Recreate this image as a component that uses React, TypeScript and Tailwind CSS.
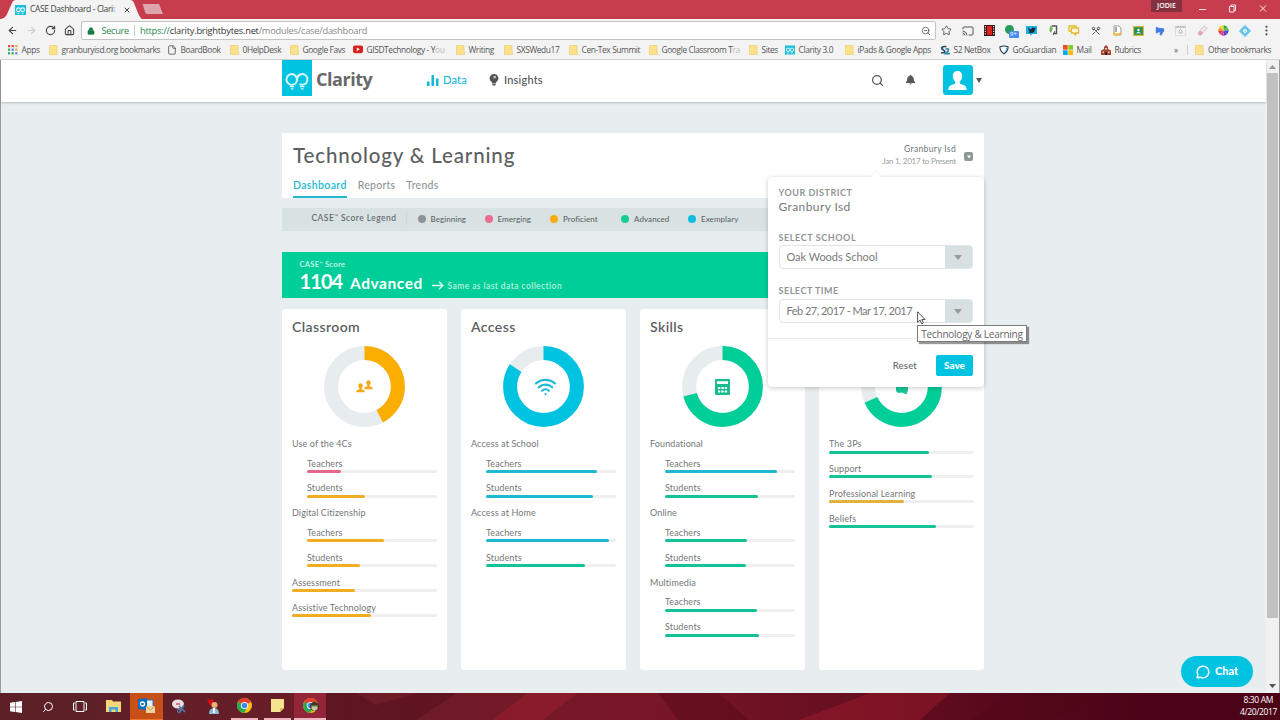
import React from "react";
import {
  ArrowLeft,
  ArrowRight,
  Calculator,
  Cast,
  File,
  House,
  Lock,
  Megaphone,
  MessageCircle,
  MoreVertical,
  RotateCw,
  Scissors,
  Search,
  Star,
  Wifi,
  X,
  ZoomOut,
} from "lucide-react";

interface Metric {
  label: string;
  value?: number;
  color?: string;
  nested?: boolean;
}

interface CardData {
  title: string;
  percent: number;
  color: string;
  icon: React.ReactNode;
  metrics: Metric[];
}

const PINK = "bg-[#e5688c]";
const ORANGE = "bg-[#f2ae22]";
const GREEN = "bg-[#15c496]";
const BLUE = "bg-[#1fb8d3]";

const Folder = () => (
  <svg width="9" height="10" viewBox="0 0 9 10">
    <path d="M.5.5h7.5V7l.7.6V9.5H.5z" fill="#fbe18a" stroke="#ecd17a" strokeWidth=".8" />
  </svg>
);

const ClarityIcon = ({ className }: { className: string }) => (
  <svg viewBox="0 0 30 36" className={className} preserveAspectRatio="none">
    <rect width="30" height="36" fill="#00c3e2" />
    <g fill="none" stroke="#d9f8fd" strokeWidth="1.9">
      <path d="M12.500 24A5.200 5.400 0 1 1 14.800 18.500Q15.200 21 15.200 20.500A5.200 5.400 0 1 1 17.600 24" />
      <path d="M14.800 20.500Q14.500 23 12.500 24.500M15.200 18.500Q15.500 15.500 17.800 14.700" />
      <path d="M7.800 26.700h4.500M17.900 26.700h4.500M8.800 28.800h2.600M18.900 28.800h2.600" strokeWidth="1.300" />
    </g>
  </svg>
);

// same mark without the bulb bases, readable at favicon size
const ClarityFavicon = () => (
  <svg width="11" height="10" viewBox="0 0 11 10">
    <path d="M0 0h11v10H0z" fill="#1cbfdb" />
    <g fill="none" stroke="#e4fafd" strokeWidth="1.100">
      <circle cx="3.400" cy="4.800" r="1.900" />
      <circle cx="7.600" cy="4.800" r="1.900" />
      <path d="M2.500 8.300h1.800M6.700 8.300h1.800" />
    </g>
  </svg>
);

const UserShape = ({ className }: { className: string }) => (
  <svg viewBox="0 0 20 20" className={className} fill="currentColor">
    <path d="M10 0c3.200 0 5 2.200 5 5.200 0 2.400-1.100 4.800-2.600 5.800v1.400c0 1 1.200 1.500 3 2.200 2.600 1 4.100 1.700 4.300 5.400H.3c.2-3.700 1.700-4.400 4.300-5.400 1.800-.7 3-1.200 3-2.200V11C6.100 10 5 7.600 5 5.200 5 2.200 6.800 0 10 0z" />
  </svg>
);

const ChromeLogo = ({ className }: { className: string }) => (
  <svg viewBox="0 0 20 20" className={className}>
    <circle cx="10" cy="10" r="10" fill="#fbc116" />
    <path d="M10 10L1.300 5A10 10 0 0 1 18.700 5z" fill="#e0402f" />
    <path d="M10 10L1.300 5A10 10 0 0 0 9.500 20L14 12z" fill="#2da94f" />
    <circle cx="10" cy="10" r="4.800" fill="#fff" />
    <circle cx="10" cy="10" r="3.700" fill="#4285f4" />
  </svg>
);

const bookmarks = [
  {
    label: "Apps",
    width: "w-[40px]",
    icon: (
      <svg width="10" height="10" viewBox="0 0 10 10">
        {["#e0483e", "#e0483e", "#e6a93a", "#38a860", "#4a8af4", "#e6a93a", "#38a860", "#38a860", "#4a8af4"].map(
          (c, i) => (
            <rect key={i} x={(i % 3) * 3.600} y={Math.floor(i / 3) * 3.600} width="2.200" height="2.200" fill={c} />
          )
        )}
      </svg>
    ),
  },
  { label: "granburyisd.org bookmarks", width: "w-[119px]", icon: <Folder /> },
  { label: "BoardBook", width: "w-[62px]", icon: <File size={10} color="#555" strokeWidth={2} /> },
  { label: "0HelpDesk", width: "w-[60px]", icon: <Folder /> },
  { label: "Google Favs", width: "w-[64px]", icon: <Folder /> },
  {
    label: "GISDTechnology - Y",
    faded: "ou",
    width: "w-[102px]",
    icon: (
      <svg width="11" height="9" viewBox="0 0 11 9">
        <rect width="11" height="8.500" rx="2" fill="#d8201f" />
        <path d="M4.200 2.300v4l3.200-2z" fill="#fff" />
      </svg>
    ),
  },
  { label: "Writing", width: "w-[48px]", icon: <Folder /> },
  { label: "SXSWedu17", width: "w-[65px]", icon: <Folder /> },
  { label: "Cen-Tex Summit", width: "w-[80px]", icon: <Folder /> },
  { label: "Google Classroom T", faded: "ra", width: "w-[100px]", icon: <Folder /> },
  { label: "Sites", width: "w-[37px]", icon: <Folder /> },
  { label: "Clarity 3.0", width: "w-[59px]", icon: <ClarityFavicon /> },
  { label: "iPads & Google Apps", width: "w-[96px]", icon: <Folder /> },
  {
    label: "S2 NetBox",
    width: "w-[59px]",
    icon: (
      <svg width="11" height="10" viewBox="0 0 11 10" fill="none" strokeWidth="1.800">
        <path d="M7 1.500C3 .5 0 2.500 3 4.500S7 8 1 8" stroke="#254a63" />
        <path d="M6 4c3-1 4 0 3 2L6 9h5" stroke="#3388ae" />
      </svg>
    ),
  },
  {
    label: "GoGuardian",
    width: "w-[64px]",
    icon: (
      <svg width="11" height="10" viewBox="0 0 11 10">
        <path d="M1 1.500Q5.500-.3 10 1.500Q10 6.500 5.500 9.300Q1 6.500 1 1.500z" fill="#fff" stroke="#20384a" strokeWidth="1.200" />
        <path d="M8.500 2.500Q8.500 6 5.500 8" fill="none" stroke="#36a8cf" strokeWidth="1" />
      </svg>
    ),
  },
  {
    label: "Mail",
    width: "w-[38px]",
    icon: (
      <svg width="10" height="10" viewBox="0 0 10 10">
        <path d="M0 0h4.700v4.700H0z" fill="#f1511b" />
        <path d="M5.300 0H10v4.700H5.300z" fill="#80cc28" />
        <path d="M0 5.300h4.700V10H0z" fill="#00adef" />
        <path d="M5.300 5.300H10V10H5.300z" fill="#fbbc09" />
      </svg>
    ),
  },
  {
    label: "Rubrics",
    width: "w-[73px]",
    icon: (
      <svg width="10" height="10" viewBox="0 0 10 10">
        <path d="M5 0l2 2v2l3 1.500V10H0V5.500L3 4V2z" fill="#a7423a" />
        <path d="M4 3h2v1.500H4zM1.500 6.500H3V8H1.500zM7 6.500h1.500V8H7z" fill="#f3cf8e" />
        <path d="M4 7h2v3H4z" fill="#36251f" />
      </svg>
    ),
  },
];

const extensions = [
  <Star size={11} color="#555" />,
  <Cast size={12} color="#555" />,
  <svg width="11" height="11" viewBox="0 0 11 11">
    <path d="M0 0h11v11H0z" fill="#3b1518" />
    <path d="M3 1h5v9H3z" fill="#e0221c" />
    <path d="M1.300 1v9M9.700 1v9" stroke="#fff" strokeWidth="1" strokeDasharray="1.200 1.200" />
  </svg>,
  <div className="relative h-[11px] w-[12px]">
    <div className="h-[9px] w-[9px] rounded-full bg-[#259b5b]" />
    <span className="absolute left-[4px] top-[6px] h-[7px] w-[10px] rounded-[1px] bg-[#4a8af5] text-center text-[6px] leading-[6px] text-white">
      9+
    </span>
  </div>,
  <svg width="11" height="10" viewBox="0 0 11 10">
    <path d="M0 0h11v8H6L5 10 4 8H0z" fill="#23b0e0" />
    <path d="M2 1.500Q4 4 5.500 3Q6 1 8 1.800L9.500 2Q9 7 5 7Q3 7 2 6L4 5.500Q2 4 2 1.500z" fill="#122a3a" />
  </svg>,
  <svg width="11" height="12" viewBox="0 0 11 12">
    <path d="M3.500 1h5v7.500H5" fill="#fff" stroke="#555" strokeWidth="1.400" />
    <path d="M2 1l3 2-2 5-1.500-2z" fill="#6ab54a" />
    <path d="M5 10l2-4" stroke="#555" />
  </svg>,
  <svg width="12" height="11" viewBox="0 0 12 11" fill="#fff8d7" stroke="#e5b92b" strokeWidth="1.300">
    <path d="M1 1h7v5H1z" />
    <path d="M3.500 3h7v5h-3v2l-2-2h-2z" />
  </svg>,
  <Scissors size={10} color="#444" className="rotate-90" />,
  <svg width="11" height="11" viewBox="0 0 11 11">
    <path d="M2 1h5l2 2v7H2z" fill="#fff" stroke="#999" />
    <path d="M1 6q3 4 8 1l1 2-4 2-5-1z" fill="#e8bf5d" />
    <path d="M4 2v5" stroke="#555" />
  </svg>,
  <svg width="11" height="10" viewBox="0 0 11 10">
    <path d="M0 0h11v10H0z" fill="#e0b633" />
    <path d="M1.200 1.200h8.600v7.600H1.200z" fill="#21925c" />
    <circle cx="5.500" cy="4" r="1.200" fill="#fff" />
    <path d="M3 7.300q2.500-3 5 0z" fill="#fff" />
  </svg>,
  <Megaphone size={10} color="#3f79e0" fill="#3f79e0" className="-scale-x-100" />,
  <svg width="11" height="11" viewBox="0 0 11 11">
    <path d="M.5 1h10v9.500H.5z" fill="#f3f3f3" stroke="#ddd" />
    <path d="M.5 1h10v2H.5z" fill="#c5c5c5" />
    <path d="M4 8V6l1.500-1.500L7 6v2z" fill="none" stroke="#aaa" strokeWidth=".8" />
  </svg>,
  <svg width="11" height="11" viewBox="0 0 11 11">
    <path d="M1 8l6-7 3 2-6 7q-2 1-3-2z" fill="#f8e8e8" stroke="#bbb" strokeWidth=".8" />
    <path d="M1 8l2-2.500 3 2L4 10q-2 1-3-2z" fill="#eea2a8" />
  </svg>,
  <svg width="11" height="11" viewBox="0 0 12 12">
    <path d="M6 6V0L10 1.800z" fill="#25a84c" />
    <path d="M6 6l4-4.200L12 6z" fill="#5dc33b" />
    <path d="M6 6h6l-2 4.200z" fill="#3352d6" />
    <path d="M6 6l4 4.200L6 12z" fill="#7132b0" />
    <path d="M6 6v6l-4-1.800z" fill="#d63bbd" />
    <path d="M6 6l-4 4.200L0 6z" fill="#e9352e" />
    <path d="M6 6H0l2-4.200z" fill="#f59b21" />
    <path d="M6 6L2 1.800 6 0z" fill="#f3d728" />
  </svg>,
  <svg width="12" height="12" viewBox="0 0 12 12">
    <path d="M6 .5L11.500 6 6 11.500.5 6z" fill="#5ec2ea" stroke="#5ec2ea" strokeLinejoin="round" />
    <path d="M6 3.500L8.500 6 6 8.500 3.500 6z" fill="#fff" />
    <path d="M6 5l1 1-1 1-1-1z" fill="#5ec2ea" />
  </svg>,
  <MoreVertical size={13} color="#444" />,
];

const legend = [
  { label: "Beginning", dot: "bg-[#8c9596]", width: "w-[67px]" },
  { label: "Emerging", dot: "bg-[#eb6b92]", width: "w-[65.500px]" },
  { label: "Proficient", dot: "bg-[#f9ab0d]", width: "w-[71px]" },
  { label: "Advanced", dot: "bg-[#14cc94]", width: "w-[67px]" },
  { label: "Exemplary", dot: "bg-[#0fbde0]", width: "w-[60px]" },
];

const cards: CardData[] = [
  {
    title: "Classroom",
    percent: 42.5,
    color: "#fbad00",
    icon: (
      <span className="flex items-start text-[#f5a91a]">
        <UserShape className="mt-[3px] h-[9.500px] w-[9px]" />
        <UserShape className="-ml-px h-[9.500px] w-[9px]" />
      </span>
    ),
    metrics: [
      { label: "Use of the 4Cs" },
      { label: "Teachers", value: 26, color: PINK, nested: true },
      { label: "Students", value: 44.6, color: ORANGE, nested: true },
      { label: "Digital Citizenship" },
      { label: "Teachers", value: 59, color: ORANGE, nested: true },
      { label: "Students", value: 40.5, color: ORANGE, nested: true },
      { label: "Assessment", value: 43.3, color: ORANGE },
      { label: "Assistive Technology", value: 54.3, color: ORANGE },
    ],
  },
  {
    title: "Access",
    percent: 84.3,
    color: "#00c3e2",
    icon: <Wifi size={23} color="#1fb8d8" strokeWidth={2.300} className="ml-1" />,
    metrics: [
      { label: "Access at School" },
      { label: "Teachers", value: 85.4, color: BLUE, nested: true },
      { label: "Students", value: 82.3, color: BLUE, nested: true },
      { label: "Access at Home" },
      { label: "Teachers", value: 94.4, color: BLUE, nested: true },
      { label: "Students", value: 76, color: GREEN, nested: true },
    ],
  },
  {
    title: "Skills",
    percent: 71,
    color: "#00ce98",
    icon: (
      <svg width="15" height="16" viewBox="0 0 15 16">
        <rect width="15" height="16" rx="1" fill="#17bd8e" />
        <path d="M2 2.300h11v2.700H2zM3 8h2.300v2H3zM6.400 8h2.300v2H6.400zM9.800 8h2.300v2H9.800zM3 11.500h2.300v2H3zM6.400 11.500h2.300v2H6.400zM9.800 11.500h2.300v2H9.800z" fill="#fff" />
      </svg>
    ),
    metrics: [
      { label: "Foundational" },
      { label: "Teachers", value: 86, color: BLUE, nested: true },
      { label: "Students", value: 71.6, color: GREEN, nested: true },
      { label: "Online" },
      { label: "Teachers", value: 62.8, color: GREEN, nested: true },
      { label: "Students", value: 62.3, color: GREEN, nested: true },
      { label: "Multimedia" },
      { label: "Teachers", value: 70.5, color: GREEN, nested: true },
      { label: "Students", value: 72, color: GREEN, nested: true },
    ],
  },
  {
    title: "",
    percent: 68.4,
    color: "#00ce98",
    icon: (
      <svg width="16" height="16" viewBox="0 0 16 16" fill="#17c596">
        <path d="M2 3h12v8l-1.500 4.500L8 13.500l-4 .5-2-2z" />
      </svg>
    ),
    metrics: [
      { label: "The 3Ps", value: 68.9, color: GREEN },
      { label: "Support", value: 70.7, color: GREEN },
      { label: "Professional Learning", value: 51.4, color: "bg-[#e2b23c]" },
      { label: "Beliefs", value: 73.6, color: GREEN },
    ],
  },
];

const Donut = ({ percent, color, icon }: { percent: number; color: string; icon: React.ReactNode }) => (
  <div className="relative mx-auto h-[81px] w-[81px]">
    <svg viewBox="0 0 81 81" className="h-full w-full -rotate-90">
      <circle cx="40.500" cy="40.500" r="33.400" fill="none" stroke="#e7ecee" strokeWidth="14" />
      <circle
        cx="40.500"
        cy="40.500"
        r="33.400"
        fill="none"
        stroke={color}
        strokeWidth="14"
        pathLength={100}
        strokeDasharray={`${percent} 100`}
      />
    </svg>
    <div className="absolute inset-0 flex items-center justify-center">{icon}</div>
  </div>
);

const MetricRow = ({ metric }: { metric: Metric }) => {
  if (metric.value === undefined) {
    return <div className="h-[19.600px] leading-[13px]">{metric.label}</div>;
  }
  return (
    <div className={metric.nested ? "h-[24.900px] pl-[15px]" : "h-[24.900px]"}>
      <div className="leading-[13px]">{metric.label}</div>
      <div className="mt-[0.500px] h-[3px] rounded-full bg-[#efefef]">
        <div className={`h-full rounded-full ${metric.color}`} style={{ width: `${metric.value}%` }} />
      </div>
    </div>
  );
};

const ScoreCard = ({ card }: { card: CardData }) => (
  <div className="h-[361px] w-[165px] rounded-[3px] bg-white px-[10px] pt-[9px]">
    <h2 className="h-[28px] text-[14px] font-semibold leading-[18px] tracking-[0.400px] text-[#5c6163]">{card.title}</h2>
    <Donut percent={card.percent} color={card.color} icon={card.icon} />
    <div className="mt-[10px] whitespace-nowrap text-[9px] tracking-[0.120px] text-[#737778]">
      {card.metrics.map((m, i) => (
        <MetricRow key={i} metric={m} />
      ))}
    </div>
  </div>
);

const Select = ({ value, tracking }: { value: string; tracking: string }) => (
  <div className="flex h-[24px] w-[194px] overflow-hidden rounded-[4px] border border-[#dfe4e5] bg-white">
    <div className={`flex-1 pl-[7px] text-[11px] leading-[22px] text-[#777b7c] ${tracking}`}>{value}</div>
    <div className="flex w-[27px] items-center justify-center bg-[#d8e1e2]">
      <svg width="8" height="5" viewBox="0 0 8 5">
        <path d="M0 0h8L4 5z" fill="#929c9d" />
      </svg>
    </div>
  </div>
);

const FilterPopover = () => (
  <div className="absolute left-[486px] top-[44px] h-[210px] w-[216px] rounded-[4px] bg-white text-[#8f9596] shadow-[0_1px_5px_rgba(0,0,0,0.22)]">
    <svg width="16" height="9" viewBox="0 0 16 9" className="absolute -top-[8px] left-[100px]">
      <path d="M0 9Q3 9 8 1Q13 9 16 9z" fill="#fff" stroke="#eee" strokeWidth=".7" />
      <path d="M0 8.500h16V9H0z" fill="#fff" />
    </svg>
    <div className="h-[162px] border-b border-[#e8ebec] pl-[10.500px] pt-[10px] whitespace-nowrap">
      <div className="text-[9px] font-bold leading-[12px] tracking-[0.520px]">YOUR DISTRICT</div>
      <div className="text-[12px] leading-[16px] tracking-[0.400px] text-[#757a7b]">Granbury Isd</div>
      <div className="mt-[17px] text-[9px] font-bold leading-[12px] tracking-[0.580px]">SELECT SCHOOL</div>
      <div className="mt-px">
        <Select value="Oak Woods School" tracking="tracking-[-0.050px]" />
      </div>
      <div className="mt-[16px] text-[9px] font-bold leading-[12px] tracking-[0.520px]">SELECT TIME</div>
      <div className="mt-[2px]">
        <Select value="Feb 27, 2017 - Mar 17, 2017" tracking="tracking-[-0.520px]" />
      </div>
    </div>
    <div className="flex h-[48px] items-center justify-end gap-[19px] pr-[11px] pt-[5px]">
      <span className="pt-px text-[9.500px] font-medium tracking-[0.200px] text-[#5f6465]">Reset</span>
      <button className="h-[21px] w-[37px] rounded-[2px] bg-[#00c3e2] text-[10px] font-black text-white">Save</button>
    </div>
    <div className="absolute left-[149px] top-[148px] h-[17px] w-[110px] whitespace-nowrap border border-[#7b7b7b] bg-white text-center font-['Open_Sans'] text-[10px] leading-[16px] tracking-[-0.240px] text-[#666] shadow-[2px_2px_1px_rgba(0,0,0,0.4)]">
      Technology &amp; Learning
    </div>
    <svg width="9" height="14" viewBox="0 0 9 14" className="absolute left-[149px] top-[134px]">
      <path d="M.6.800v10.500l2.500-2.200 1.500 3.700 1.800-.8-1.600-3.500h3.300z" fill="#fff" stroke="#3f3f4a" strokeWidth=".9" />
    </svg>
  </div>
);

const BrowserChrome = () => (
  <div className="h-[60px] font-['Open_Sans',sans-serif]">
    <div className="flex h-[19px] justify-between bg-[#c83d4d]">
      <div className="flex">
        <div className="relative h-[19px] w-[142px]">
          <svg width="142" height="19" viewBox="0 0 142 19" className="absolute inset-0">
            <path d="M1 19Q6 18 8 12L12 3Q13 0 16 0H130Q133 0 134 3L138 13Q140 18 142 19z" fill="#f3f3f3" />
          </svg>
          <div className="relative flex h-[19px] items-center pl-[15px]">
            <ClarityFavicon />
            <span className="ml-1 w-[88px] whitespace-nowrap text-[8.500px] tracking-[-0.380px] text-[#444]">
              CASE Dashboard - Clari<span className="text-[#bbb]">t</span>
            </span>
            <X size={8} color="#444" strokeWidth={3} className="ml-[5px]" />
          </div>
        </div>
        <svg width="22" height="11" viewBox="0 0 22 11" className="mt-[4px]">
          <path d="M1 1Q-1 0 1 0H17L21 10H5Q4 10 3 8z" fill="#dca6ac" />
        </svg>
      </div>
      <div className="flex">
        <div className="mr-[17px] h-[12px] w-[31px] bg-[#84303f] text-center text-[7px] font-semibold leading-[11px] text-white">JODIE</div>
        <svg width="81" height="19" viewBox="0 0 81 19" fill="none" stroke="#f8e4e7">
          <path d="M0 9.500h7M30.500 6.500h4.500V12h-4.500zM32 6.500v-1.500h4.500V10.500h-1.500M61 5.500l6 6M67 5.500l-6 6" />
        </svg>
      </div>
    </div>
    <div className="flex h-[22px] items-center border-b border-[#f2f2f2] bg-[#f3f3f3] pt-[2px]">
      <div className="flex w-[81px] items-center gap-[8px] pl-[7px]">
        <ArrowLeft size={11} color="#444" strokeWidth={2.500} />
        <ArrowRight size={11} color="#ccc" strokeWidth={2.500} />
        <RotateCw size={11} color="#444" strokeWidth={2.500} />
        <House size={11} color="#444" strokeWidth={2.300} />
      </div>
      <div className="flex h-[19px] w-[855px] items-center rounded-[2px] border border-[#c4c4c4] bg-white pl-[5px] pr-[4px] text-[9.300px] leading-[16px]">
        <Lock size={8} color="#187c3e" fill="#187c3e" />
        <span className="ml-[5px] w-[34px] pl-[1.500px] tracking-[-0.350px] text-[#2b8653]">Secure</span>
        <span className="mr-[5px] h-[11px] w-px bg-[#ccc]" />
        <span className="whitespace-nowrap tracking-[-0.240px] text-[#888]">
          <span className="text-[#2b8653]">https://</span>
          <span className="text-[#333]">clarity.brightbytes.net</span>/modules/case/dashboard
        </span>
        <ZoomOut size={10} color="#555" className="ml-auto" />
      </div>
      <div className="flex">
        {extensions.map((icon, i) => (
          <div key={i} className="flex w-[21.300px] items-center justify-center">
            {icon}
          </div>
        ))}
      </div>
    </div>
    <div className="flex h-[19px] items-center border-b border-[#d2d2d2] bg-[#f3f3f3] pl-[8px] text-[8.400px] tracking-[-0.380px] text-[#555]">
      {bookmarks.map((b) => (
        <div key={b.label} className={`flex shrink-0 items-center gap-[3.500px] whitespace-nowrap ${b.width}`}>
          <span className="flex w-[10px] shrink-0 justify-center">{b.icon}</span>
          <span>
            {b.label}
            {b.faded && <span className="text-[#bbb]">{b.faded}</span>}
          </span>
        </div>
      ))}
      <span className="w-[13px]">»</span>
      <span className="mr-[7px] h-[10px] w-px bg-[#ccc]" />
      <Folder />
      <span className="ml-[4px] whitespace-nowrap">Other bookmarks</span>
    </div>
  </div>
);

const SiteHeader = () => (
  <header className="flex h-[42px] items-start bg-white pl-[281px] shadow-[0_1px_2px_rgba(0,0,0,0.2)]">
    <ClarityIcon className="h-[36px] w-[30px]" />
    <span className="ml-[4px] w-[111px] font-['Open_Sans'] text-[18px] font-bold leading-[38px] tracking-[-0.450px] text-[#67696b]">Clarity</span>
    <nav className="flex h-[40px] items-center text-[11px] font-medium tracking-[0.200px]">
      <svg width="12" height="11" viewBox="0 0 12 11" fill="#12b7dc">
        <path d="M0 6.500h2.500V11H0zM4.500 0H7v11H4.500zM9 3.500h2.500V11H9z" />
      </svg>
      <span className="ml-[4px] w-[46px] pt-px text-[#12b7dc]">Data</span>
      <svg width="10" height="12" viewBox="0 0 10 12">
        <path d="M5 0a4.200 4.200 0 0 1 2.500 7.700L7 9H3l-.5-1.300A4.200 4.200 0 0 1 5 0zM3.200 9.600h3.600v.8L6 11.500H4l-.8-1.100z" fill="#555" />
        <path d="M4.500 2h2.300v2.300H4.500z" fill="#c9c9c9" />
      </svg>
      <span className="ml-[5px] pt-px text-[#515556]">Insights</span>
    </nav>
    <div className="ml-auto mr-[284px] flex h-[40px] items-center">
      <Search size={13} color="#555" strokeWidth={2.300} />
      <svg width="11" height="10" viewBox="0 0 11 10" fill="#585858" className="ml-[21px] mr-[27px]">
        <path d="M5.500 0c.7 0 1 .4 1 .9C8.300 1.300 8.800 2.700 8.800 4.300c0 1.700.5 2.200 1.200 2.800.4.300.3 1-.3 1H1.300c-.6 0-.7-.7-.3-1 .7-.6 1.200-1.100 1.200-2.800 0-1.600.5-3 2.300-3.400 0-.5.300-.9 1-.9zM4.200 8.600h2.600Q6.500 9.700 5.500 9.700T4.200 8.600z" />
      </svg>
      <div className="flex h-[30px] w-[30px] items-center justify-center rounded-[3px] bg-[#00c3e2] text-white">
        <UserShape className="h-[19px] w-[19px]" />
      </div>
      <svg width="6" height="5" viewBox="0 0 6 5" className="ml-[3.500px]">
        <path d="M0 0h6L3 5z" fill="#555" />
      </svg>
    </div>
  </header>
);

const TaskItem = ({ width, className = "", children }: { width: string; className?: string; children: React.ReactNode }) => (
  <div className={`flex h-full items-center justify-center ${width} ${className}`}>{children}</div>
);

const Taskbar = () => (
  <footer className="flex h-[27px] justify-between bg-linear-to-r from-[#5d2027] from-5% via-[#7a1628] via-50% to-[#4b0417] to-90% text-white">
    <div className="flex h-full">
      <TaskItem width="w-[32px]">
        <svg width="12" height="12" viewBox="0 0 12 12" fill="#fff">
          <path d="M0 1.700l5-.7v4.700H0zM5.600.900L12 0v5.700H5.600zM0 6.300h5V11l-5-.7zM5.600 6.300H12V12l-6.400-.9z" />
        </svg>
      </TaskItem>
      <TaskItem width="w-[32px]">
        <Search size={12} className="-scale-x-100" />
      </TaskItem>
      <TaskItem width="w-[32px]">
        <svg width="14" height="11" viewBox="0 0 14 11" fill="none" stroke="#fff">
          <path d="M3 .5h8v10H3zM1.800 2H.5v7h1.300M12.200 2h1.300v7h-1.300" />
        </svg>
      </TaskItem>
      <TaskItem width="w-[34px]">
        <svg width="15" height="13" viewBox="0 0 15 13">
          <path d="M0 0h6l1 1.500h8V12H0z" fill="#f3d778" />
          <path d="M3 12V7h9v5H9.500V9.500h-4V12z" fill="#47a5d8" />
        </svg>
      </TaskItem>
      <TaskItem width="w-[33px]" className="border-b border-[#f27428] bg-[#c94f18]">
        <svg width="17" height="16" viewBox="0 0 17 16">
          <path d="M7 2h8v8H7z" fill="#e6f1fa" stroke="#1f7bc7" />
          <path d="M0 1l9-1v12l-9-1z" fill="#0d6dbd" />
          <circle cx="4.500" cy="6" r="2" fill="none" stroke="#fff" strokeWidth="1.300" />
          <path d="M8 8h9v7H8z" fill="#f1d59e" />
          <path d="M8 8l4.500 4L17 8" fill="none" stroke="#c39957" />
        </svg>
      </TaskItem>
      <TaskItem width="w-[33px]">
        <svg width="15" height="15" viewBox="0 0 15 15">
          <ellipse cx="6" cy="5" rx="6" ry="4.500" fill="#e7dfe1" />
          <path d="M4 4h4v2H4z" fill="#d87480" />
          <path d="M7 7l6 6M12 6l-5 8" stroke="#547baa" strokeWidth="1.600" />
          <circle cx="7" cy="12" r="1.600" fill="none" stroke="#547baa" />
        </svg>
      </TaskItem>
      <TaskItem width="w-[35px]">
        <svg width="13" height="15" viewBox="0 0 13 15">
          <path d="M0 1l6-1 1 4-4 3z" fill="#d40d17" />
          <circle cx="7.500" cy="6" r="3" fill="#e8b17e" />
          <path d="M2 15q0-6 5-6t5 6z" fill="#8bbad7" />
          <path d="M6 9h2v5H6z" fill="#fff" />
        </svg>
      </TaskItem>
      <TaskItem width="w-[27px]" className="border-b-2 border-[#efb5be]">
        <ChromeLogo className="h-[15px] w-[15px]" />
      </TaskItem>
      <TaskItem width="w-[27px]" className="ml-[6px] border-b-2 border-[#efb5be]">
        <svg width="13" height="13" viewBox="0 0 13 13">
          <path d="M0 0h13v9l-4 4H0z" fill="#f6e391" />
          <path d="M13 9H9v4z" fill="#d8bd5a" />
        </svg>
      </TaskItem>
      <TaskItem width="w-[32px]" className="relative ml-[3px] border-b-2 border-[#efb5be] bg-[#94243a]">
        <ChromeLogo className="h-[15px] w-[15px]" />
        <svg width="9" height="10" viewBox="0 0 9 10" className="absolute left-[16px] top-[9px]">
          <circle cx="4.500" cy="4.500" r="4.500" fill="#393722" />
          <path d="M1.500 4h6v3l-3 2-3-2z" fill="#d8c4a4" />
          <path d="M1 3h7v1.500H1z" fill="#58783a" />
        </svg>
      </TaskItem>
    </div>
    <svg viewBox="0 0 900 27" preserveAspectRatio="none" className="h-full flex-1 opacity-40">
      <path d="M0 0h30l20 12 40-12h40L90 27H0z" fill="#4c0c1a" />
      <path d="M200 0h50l-35 27h-50zM470 27l70-27h80l-30 27z" fill="#a9202f" />
      <path d="M330 0h60l30 27h-70zM680 0h100l-60 27h-80z" fill="#500815" />
    </svg>
    <div className="w-[48px] pr-[3px] pt-px text-right font-['Open_Sans'] text-[8.500px] leading-[12px] tracking-[-0.350px]">
      <div className="pr-[4px]">8:30 AM</div>
      <div>4/20/2017</div>
    </div>
  </footer>
);

export default function App() {
  return (
    <div className="flex h-[720px] w-[1280px] flex-col overflow-hidden bg-[#e8edef] font-[Lato,sans-serif]">
      <BrowserChrome />
      <div className="flex h-[633px] border-x border-[#9b9b9b]">
        <div className="relative w-[1265px]">
          <SiteHeader />
          <main className="relative ml-[281px] mt-[31px] w-[702px]">
            <section className="flex h-[65px] justify-between bg-white pl-[11px]">
              <div>
                <h1 className="mt-[10px] whitespace-nowrap text-[20.500px] font-medium leading-[24px] tracking-[0.850px] text-[#5c6061]">
                  Technology &amp; Learning
                </h1>
                <div className="mt-[9px] flex gap-[11px] text-[10.500px] leading-[18px] tracking-[0.360px] text-[#8e9596]">
                  <span className="h-[22px] border-b-2 border-[#21b8cf] font-semibold text-[#21b8cf]">Dashboard</span>
                  <span className="font-medium tracking-[0.250px]">Reports</span>
                  <span className="font-medium tracking-[0.250px]">Trends</span>
                </div>
              </div>
              <div className="flex items-start gap-[8px] whitespace-nowrap pr-[11px] pt-[10px] text-right text-[8.500px] leading-[12px]">
                <div>
                  <div className="tracking-[0.350px] text-[#707576]">Granbury Isd</div>
                  <div className="text-[8px] tracking-[-0.230px] text-[#9a9fa0]">Jan 1, 2017 to Present</div>
                </div>
                <div className="mt-[9px] flex h-[9px] w-[9px] items-center justify-center rounded-[2px] bg-[#8f9696]">
                  <svg width="4" height="4" viewBox="0 0 4 4">
                    <path d="M0 .5h4L2 3.500z" fill="#fff" />
                  </svg>
                </div>
              </div>
            </section>
            <section className="mt-[10px] flex h-[23px] items-center bg-[#d9e2e3] pb-[2px] pl-[29.500px] text-[8px] text-[#5f6768]">
              <span className="w-[95px] whitespace-nowrap border-r border-[#cfd8d9] text-[8.500px] font-medium tracking-[0.440px]">
                CASE<span className="align-top text-[5px] leading-[8px]">™</span> Score Legend
              </span>
              <div className="ml-[11px] flex">
                {legend.map((l) => (
                  <div key={l.label} className={`flex items-center gap-[5px] font-medium tracking-[0.060px] ${l.width}`}>
                    <span className={`h-[8px] w-[8px] shrink-0 rounded-full ${l.dot}`} />
                    {l.label}
                  </div>
                ))}
              </div>
            </section>
            <section className="mt-[21px] h-[46px] bg-[#00ce98] pl-[17.500px] pt-[8px] text-white">
              <div className="text-[7.500px] font-bold leading-[9px] tracking-[0.330px] text-[#c5f6e6]">
                CASE<span className="align-top text-[4px] leading-[7px]">™</span> Score
              </div>
              <div className="flex items-baseline leading-[24px]">
                <span className="w-[50.500px] text-[20px] font-bold tracking-[-0.900px]">1104</span>
                <span className="w-[81.500px] text-[15.500px] font-bold tracking-[0.550px]">Advanced</span>
                <svg width="12" height="9" viewBox="0 0 12 9" className="translate-y-[2px] self-center" fill="none" stroke="#d8faee" strokeWidth="1.400">
                  <path d="M0 4.500h10.500M7 .8l3.800 3.700L7 8.200" />
                </svg>
                <span className="ml-[4px] text-[8.500px] font-semibold tracking-[0.420px] text-[#b5f3df]">Same as last data collection</span>
              </div>
            </section>
            <section className="mt-[11px] flex gap-[14px]">
              {cards.map((c, i) => (
                <ScoreCard key={i} card={c} />
              ))}
            </section>
            <FilterPopover />
          </main>
          <button className="absolute bottom-[6px] right-[13px] flex h-[31px] w-[72px] items-center justify-center gap-[5px] rounded-full bg-[#00c3e2] text-[11px] font-black text-white">
            <MessageCircle size={14} strokeWidth={2.500} />
            Chat
          </button>
        </div>
        <div className="flex w-[13px] flex-col items-center justify-between bg-[#f1f1f1] py-[5px]">
          <svg width="7" height="4" viewBox="0 0 7 4">
            <path d="M0 4h7L3.500 0z" fill="#999" />
          </svg>
          <div className="mb-auto mt-[4px] h-[545px] w-[11px] bg-[#c1c1c1]" />
          <svg width="7" height="4" viewBox="0 0 7 4">
            <path d="M0 0h7L3.500 4z" fill="#555" />
          </svg>
        </div>
      </div>
      <Taskbar />
    </div>
  );
}
